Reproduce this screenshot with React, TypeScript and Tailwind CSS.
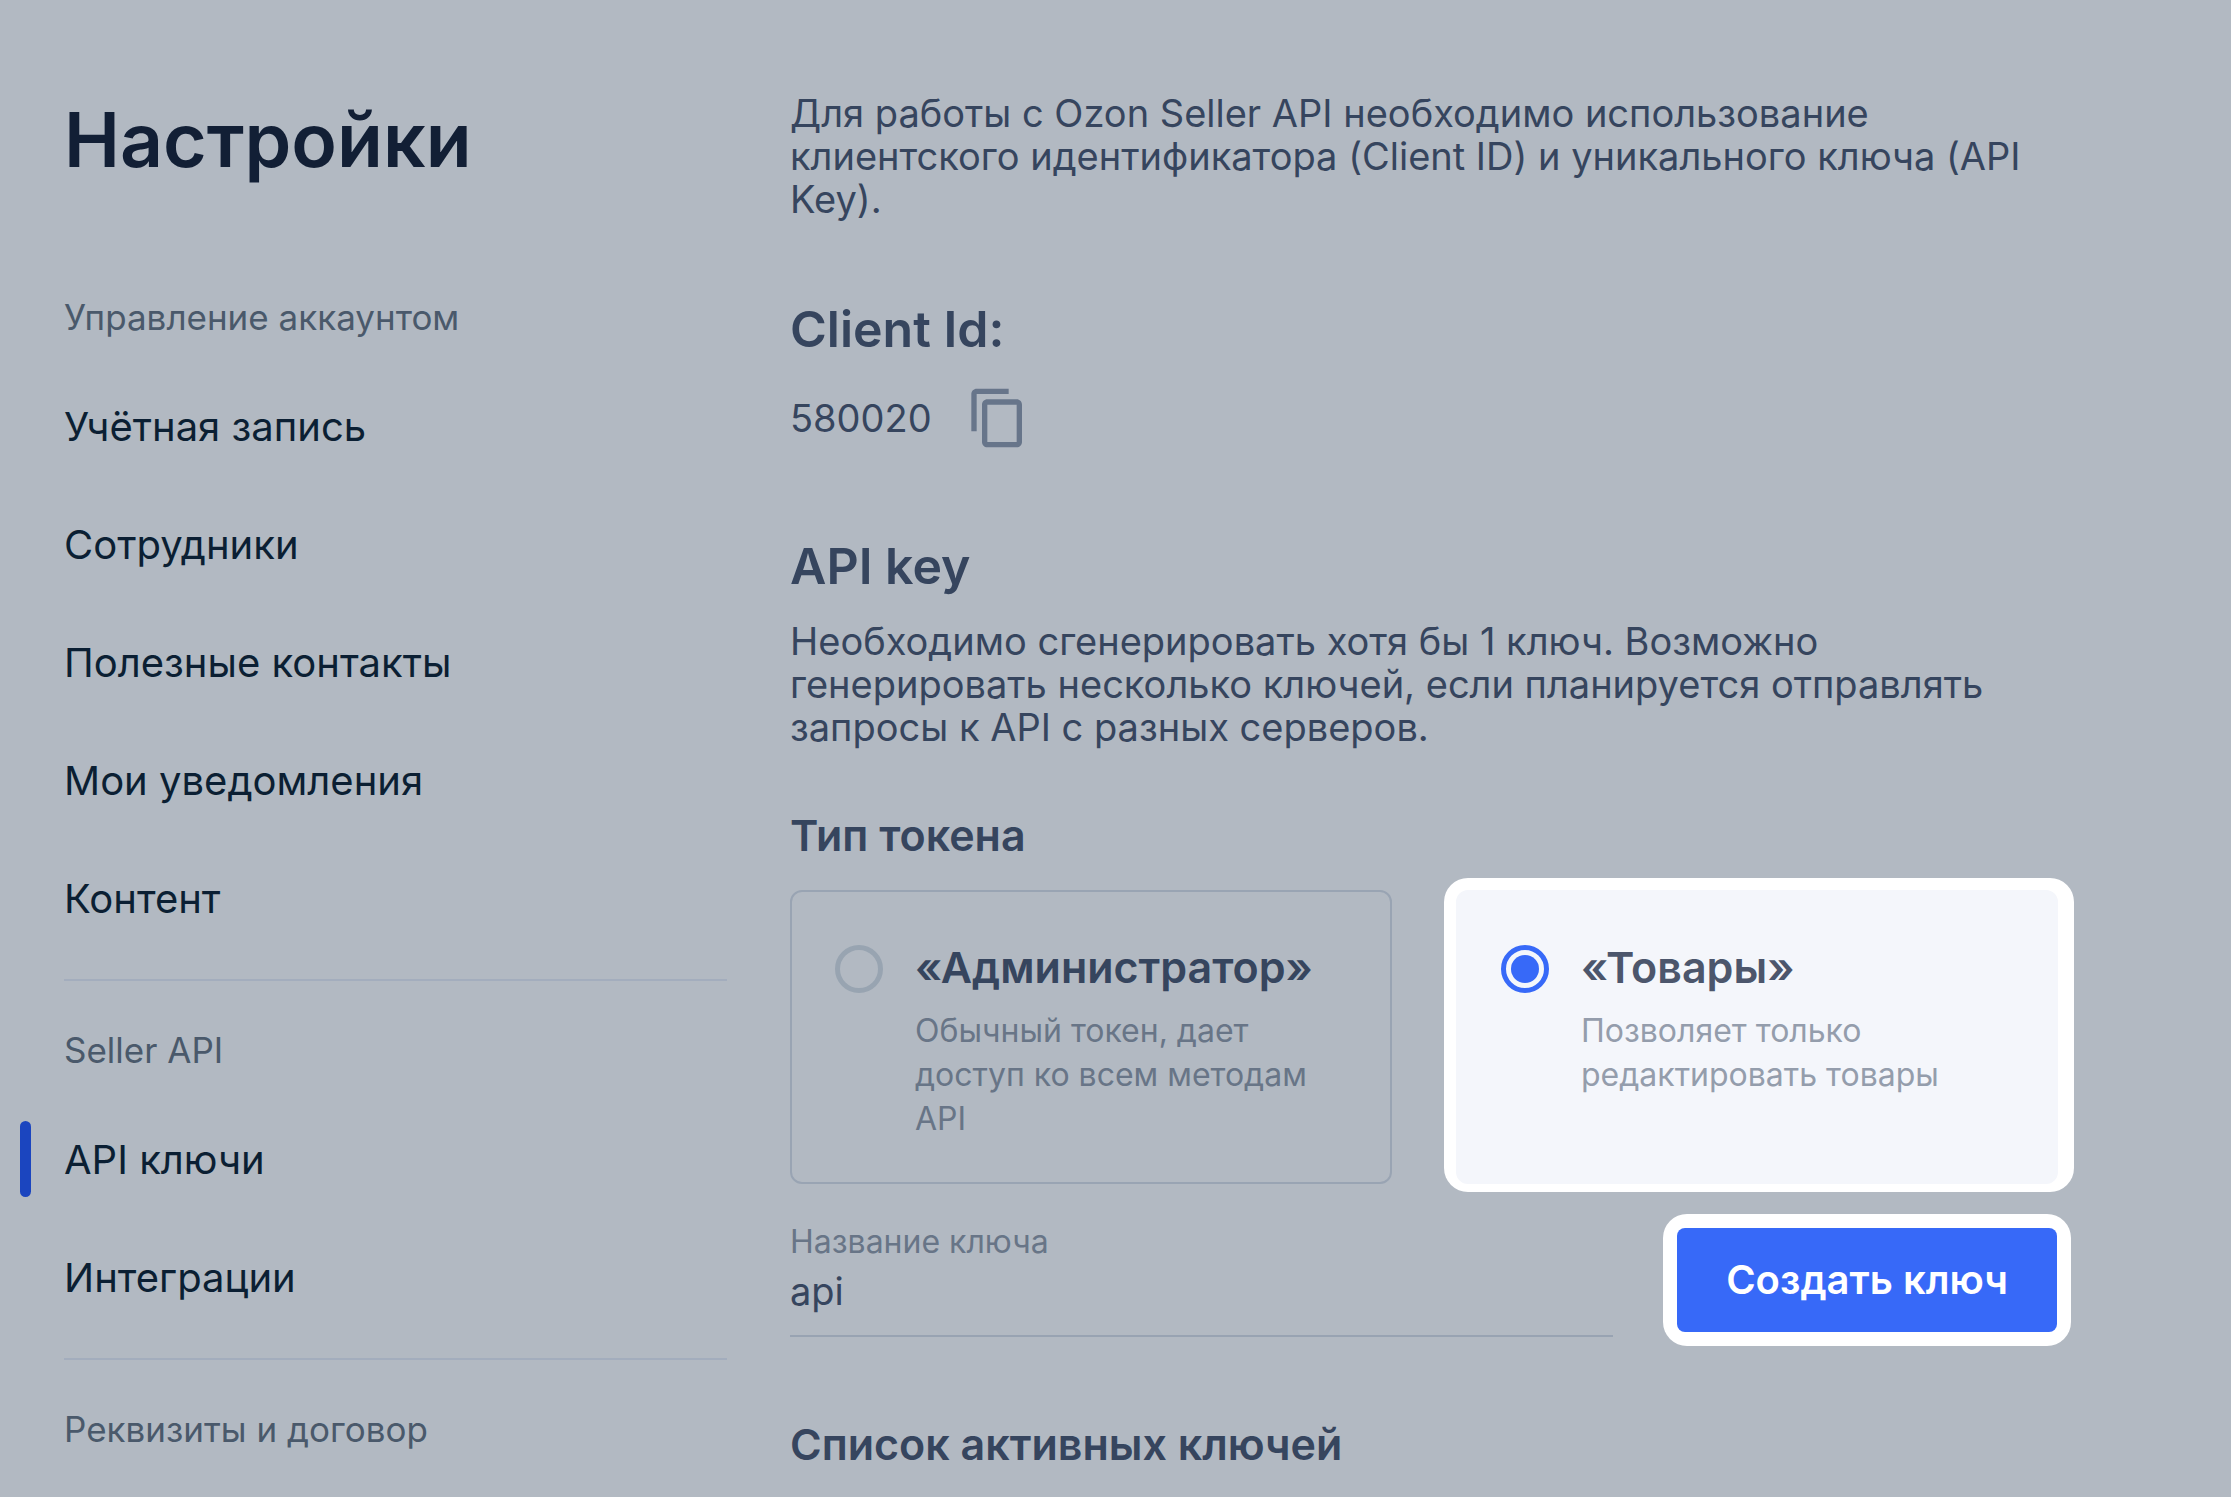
import { useState } from "react";
import { MdContentCopy } from "react-icons/md";

const account = ["Учётная запись", "Сотрудники", "Полезные контакты", "Мои уведомления", "Контент"];
const sellerApi = ["API ключи", "Интеграции"];

function NavGroup({ title, items, active }: { title: string; items: string[]; active?: string }) {
  return (
    <section>
      <h2 className="text-[35px] leading-[42px] text-[#4a596b]">{title}</h2>
      {items.length > 0 && (
        <ul className="mt-[30px]">
          {items.map((item) => (
            <li key={item} className="relative flex h-[118px] items-center">
              {item === active && (
                <span className="absolute top-5 -left-11 h-[76px] w-[11px] rounded-full bg-[#1b45bf]" />
              )}
              <a href="#" className="text-[40px] leading-[48px] text-[#0b1f33]">
                {item}
              </a>
            </li>
          ))}
        </ul>
      )}
    </section>
  );
}

function Divider() {
  return <hr className="mt-[21px] mb-12 border-t-2 border-[#a3adbd]" />;
}

type TokenProps = {
  value: string;
  title: string;
  text: string;
  checked: boolean;
  onSelect: (value: string) => void;
};

function TokenCard({ value, title, text, checked, onSelect }: TokenProps) {
  return (
    <label
      className={
        checked
          ? "flex h-full gap-8 rounded-xl border-2 border-[#f4f6fb] bg-[#f4f6fb] px-[43px] pt-[49px] pb-[41px]"
          : "flex h-full gap-8 rounded-xl border-2 border-[#99a4b3] px-[43px] pt-[49px] pb-[41px]"
      }
    >
      <input
        type="radio"
        name="token"
        value={value}
        checked={checked}
        onChange={() => onSelect(value)}
        className="mt-1 grid size-12 shrink-0 appearance-none place-items-center rounded-full border-[5px] border-[#98a4b1] before:size-[28px] before:rounded-full checked:border-[#3769f8] checked:before:bg-[#3769f8]"
      />
      <span className="block">
        <span
          className={
            checked
              ? "block text-[43px] leading-[52px] font-semibold text-[#4c566c]"
              : "block text-[43px] leading-[52px] font-semibold text-[#36455e]"
          }
        >
          {title}
        </span>
        <span
          className={
            checked
              ? "mt-4 block text-[32px] leading-[44px] text-[#949dac]"
              : "mt-4 block text-[32px] leading-[44px] text-[#687587]"
          }
        >
          {text}
        </span>
      </span>
    </label>
  );
}

export default function App() {
  const [token, setToken] = useState("products");
  const [name, setName] = useState("api");

  return (
    <div className="grid min-h-screen grid-cols-[663fr_1268fr] gap-[63px] bg-[#b2b9c2] pt-[92px] pr-[173px] pl-16 font-['Inter',sans-serif] text-[#36455e]">
      <aside>
        <h1 className="text-[75px] leading-[96px] font-semibold text-[#121f35]">Настройки</h1>
        <nav className="mt-[108px]">
          <NavGroup title="Управление аккаунтом" items={account} />
          <Divider />
          <NavGroup title="Seller API" items={sellerApi} active="API ключи" />
          <Divider />
          <NavGroup title="Реквизиты и договор" items={[]} />
        </nav>
      </aside>

      <main>
        <p className="text-[38px] leading-[43px]">
          Для работы с Ozon Seller API необходимо использование клиентского идентификатора (Client ID) и уникального
          ключа (API Key).
        </p>

        <h2 className="mt-[77px] text-[50px] leading-[62px] font-semibold">Client Id:</h2>
        <div className="mt-[26px] flex items-center gap-[34px]">
          <span className="text-[38px] leading-[43px]">580020</span>
          <button type="button" aria-label="Скопировать" className="text-[#67758a]">
            <MdContentCopy className="size-16" />
          </button>
        </div>

        <h2 className="mt-[85px] text-[50px] leading-[62px] font-semibold">API key</h2>
        <p className="mt-[23px] text-[38px] leading-[43px]">
          Необходимо сгенерировать хотя бы 1 ключ. Возможно генерировать несколько ключей, если планируется отправлять
          запросы к API с разных серверов.
        </p>

        <h3 className="mt-[60px] text-[43px] leading-[52px] font-semibold">Тип токена</h3>
        <div className="mt-[29px] grid grid-cols-2 gap-16">
          <TokenCard
            value="admin"
            title="«Администратор»"
            text="Обычный токен, дает доступ ко всем методам API"
            checked={token === "admin"}
            onSelect={setToken}
          />
          <div className="-mt-3 -mr-4 -mb-2 -ml-3 rounded-3xl bg-white pt-3 pr-4 pb-2 pl-3">
            <TokenCard
              value="products"
              title="«Товары»"
              text="Позволяет только редактировать товары"
              checked={token === "products"}
              onSelect={setToken}
            />
          </div>
        </div>

        <div className="mt-[30px] -mr-[13px] flex items-start gap-[50px]">
          <div className="flex flex-1 flex-col border-b-2 border-[#98a3b2] pt-[6px] pb-[22px]">
            <label htmlFor="key-name" className="text-[32px] leading-[44px] text-[#687587]">
              Название ключа
            </label>
            <input
              id="key-name"
              value={name}
              onChange={(e) => setName(e.target.value)}
              className="mt-[6px] h-[43px] w-full text-[38px] leading-[43px] outline-none"
            />
          </div>
          <div className="rounded-3xl bg-white p-[14px]">
            <button
              type="button"
              className="block h-[104px] rounded-lg bg-[#3769f8] px-[49px] text-[40px] leading-[48px] font-semibold text-white"
            >
              Создать ключ
            </button>
          </div>
        </div>

        <h3 className="mt-[72px] text-[43px] leading-[52px] font-semibold">Список активных ключей</h3>
      </main>
    </div>
  );
}
